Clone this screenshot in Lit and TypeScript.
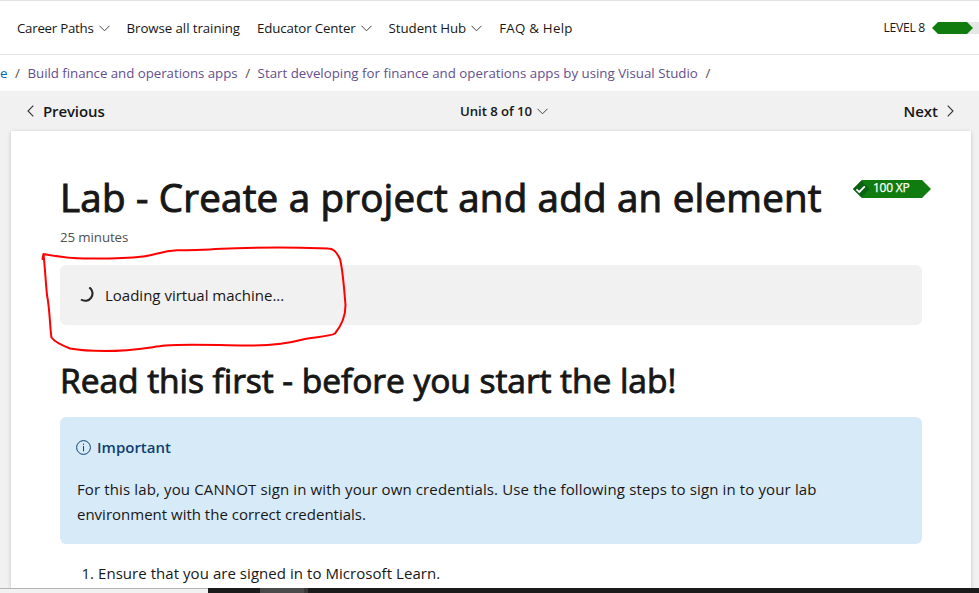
import { LitElement, html, css, svg } from "lit";
import { customElement } from "lit/decorators.js";

const chevronDown = html`<svg class="chev" width="11" height="7" viewBox="0 0 11 7">
  <path d="M.5 .8L5.500 5.800L10.500 .8" fill="none" stroke="currentColor" stroke-width="1" />
</svg>`;

const side = (d: string) => html`<svg class="side" width="7" height="12" viewBox="0 0 7 12">
  ${svg`<path d=${d} fill="none" stroke="currentColor" stroke-width="1.1" />`}
</svg>`;

@customElement("app-root")
export class AppRoot extends LitElement {
  static styles = css`
    :host {
      display: flex;
      flex-direction: column;
      position: relative;
      box-sizing: border-box;
      width: 979px;
      height: 593px;
      overflow: hidden;
      background: #fff;
      color: #171717;
      font-family: "Open Sans", "Noto Sans", sans-serif;
      white-space: nowrap;
    }
    * { box-sizing: border-box; margin: 0; }
    svg { display: block; flex: none; }
    .nav {
      flex: none;
      height: 55px;
      border-top: 1px solid #e3e3e3;
      border-bottom: 1px solid #e3e3e3;
      display: flex;
      align-items: center;
      padding-left: 17px;
      font-size: 13.3px;
    }
    .item { display: flex; align-items: center; gap: 5px; margin-right: 17px; }
    .item .chev { margin-top: 2px; }
    .n1 { letter-spacing: -0.26px; }
    .n2 { letter-spacing: -0.08px; }
    .n3 { letter-spacing: -0.14px; }
    .n4 { letter-spacing: -0.06px; }
    .n5 { letter-spacing: 0.25px; }
    .chev { color: #444; }
    .level { margin-left: auto; display: flex; align-items: center; gap: 7px; }
    .level-text { font-size: 12.2px; letter-spacing: -0.3px; }
    .crumbs {
      flex: none;
      height: 36px;
      display: flex;
      align-items: center;
      font-size: 13.3px;
      color: #64508f;
    }
    .c1 { letter-spacing: -0.04px; }
    .home { color: #0065b3; }
    .sep { color: #505050; width: 20px; text-align: center; }
    .unit {
      flex: none;
      height: 40px;
      background: #f1f1f1;
      display: grid;
      grid-template-columns: 1fr auto 1fr;
      align-items: center;
      padding: 0 25px 0 27px;
      font-weight: 600;
      font-size: 15px;
    }
    .step { display: flex; align-items: center; gap: 9px; }
    .prev-text { letter-spacing: -0.12px; }
    .next { justify-content: flex-end; }
    .count { gap: 5px; padding-left: 27px; font-size: 13.2px; letter-spacing: -0.06px; }
    .side { color: #333; }
    .page { flex: 1; background: #f1f1f1; padding: 0 8px 0 11px; min-height: 0; }
    .card {
      height: 100%;
      background: #fff;
      box-shadow: 0 1px 4px rgba(0, 0, 0, 0.2);
      padding: 39px 49px 0;
      overflow: hidden;
    }
    .title-row { display: flex; height: 57px; width: 871px; justify-content: space-between; }
    h1 {
      font-size: 38.5px;
      line-height: 54px;
      font-weight: 400;
      letter-spacing: 0.22px;
      -webkit-text-stroke: 1px currentColor;
    }
    .xp { position: relative; margin-top: 10px; height: 18px; }
    .xp-text {
      position: absolute;
      left: 20px;
      top: 0;
      line-height: 16px;
      font-size: 12px;
      letter-spacing: -0.25px;
      color: #fff;
      -webkit-text-stroke: 0.25px currentColor;
    }
    .time { font-size: 13.3px; line-height: 20px; color: #505050; letter-spacing: -0.1px; }
    .loading {
      margin-top: 18px;
      height: 60px;
      border-radius: 6px;
      background: #f1f1f1;
      display: flex;
      align-items: center;
      padding-left: 19px;
      gap: 11px;
      font-size: 15px;
    }
    h2 {
      margin-top: 31px;
      font-size: 33.6px;
      line-height: 48px;
      font-weight: 400;
      letter-spacing: -0.07px;
      -webkit-text-stroke: 0.9px currentColor;
    }
    .alert {
      margin-top: 13px;
      height: 127px;
      border-radius: 6px;
      background: #d7eaf8;
      padding: 18px 16px 0;
      font-size: 15px;
      line-height: 25px;
    }
    .alert-title { display: flex; align-items: center; gap: 6px; color: #10406d; font-weight: 600; height: 25px; }
    .alert p { margin-top: 17px; padding-left: 1px; }
    .p1 { letter-spacing: 0.13px; }
    .steps { margin-top: 17px; padding-left: 38px; font-size: 15px; line-height: 25px; letter-spacing: 0.05px; }
    .edge { flex: none; height: 5px; display: flex; background: #1b1b1b; }
    .tray { width: 208px; background: #f2f2f2; border-top: 1px solid #b4b4b4; }
    .task { width: 44px; margin-left: 52px; background: #4a4a4a; }
    .task-end { width: 4px; background: #383838; }
    .ink { position: absolute; left: 0; top: 0; pointer-events: none; }
  `;

  render() {
    return html`
      <nav class="nav">
        <span class="item"><span class="n1">Career Paths</span>${chevronDown}</span>
        <span class="item"><span class="n2">Browse all training</span></span>
        <span class="item"><span class="n3">Educator Center</span>${chevronDown}</span>
        <span class="item"><span class="n4">Student Hub</span>${chevronDown}</span>
        <span class="item"><span class="n5">FAQ &amp; Help</span></span>
        <span class="level">
          <span class="level-text">LEVEL 8</span>
          <svg width="47" height="12" viewBox="0 0 47 12">
            <path d="M34 0H47V12H34Z" fill="#e6e6e6" />
            <path d="M0 6L6 0H35L41 6L35 12H6Z" fill="#107c10" />
          </svg>
        </span>
      </nav>
      <div class="crumbs">
        <span class="home">e</span><span class="sep">/</span>
        <span class="c1">Build finance and operations apps</span><span class="sep">/</span>
        <span class="c2">Start developing for finance and operations apps by using Visual Studio</span><span class="sep">/</span>
      </div>
      <div class="unit">
        <span class="step">${side("M6.3 .7L1 6L6.3 11.3")}<span class="prev-text">Previous</span></span>
        <span class="step count"><span class="count-text">Unit 8 of 10</span>${chevronDown}</span>
        <span class="step next"><span class="next-text">Next</span>${side("M.7 .7L6 6L.7 11.3")}</span>
      </div>
      <div class="page">
        <main class="card">
          <div class="title-row">
            <h1><span>Lab - Create a project and add an element</span></h1>
            <div class="xp">
              <svg width="78" height="18" viewBox="0 0 78 18">
                <path d="M0 9L9 0H69L78 9L69 18H9Z" fill="#107c10" />
                <path d="M0 9L8.500 .5L16.500 9L8.500 17.500Z" fill="#0b6113" />
                <path d="M3.500 9.300L6.300 12L11.800 6.400" fill="none" stroke="#fff" stroke-width="1.8" />
              </svg>
              <span class="xp-text">100 XP</span>
            </div>
          </div>
          <div class="time"><span>25 minutes</span></div>
          <div class="loading">
            <svg width="15" height="16" viewBox="0 0 15 16">
              <path d="M10.300 .4A6.800 6.800 0 0 1 2 12.500" fill="none" stroke="#262626" stroke-width="2.1" />
            </svg>
            <span class="load-text">Loading virtual machine...</span>
          </div>
          <h2><span>Read this first - before you start the lab!</span></h2>
          <section class="alert">
            <div class="alert-title">
              <svg width="15" height="15" viewBox="0 0 15 15">
                <circle cx="7.500" cy="7.500" r="6.900" fill="none" stroke="currentColor" stroke-width="1" />
                <path d="M7.500 6V11.300M7.500 3.600V4.800" stroke="currentColor" stroke-width="1" />
              </svg>
              <span>Important</span>
            </div>
            <p>
              <span class="p1">For this lab, you CANNOT sign in with your own credentials. Use the following steps to sign in to your lab</span><br />
              <span class="p2">environment with the correct credentials.</span>
            </p>
          </section>
          <ol class="steps">
            <li><span>Ensure that you are signed in to Microsoft Learn.</span></li>
          </ol>
        </main>
      </div>
      <div class="edge"><span class="tray"></span><span class="task"></span><span class="task-end"></span></div>
      <svg class="ink" width="360" height="360" viewBox="0 0 360 360">
        <path
          d="M42.500 259L43.500 254C55 256 68 258.500 85 258.500C105 258.800 125 258.500 143 256.500C155 255 162 251 177 250.200C190 250 203 250.500 215 249C240 248 270 247 300 247.800L328 248.500C333 248.500 336 251 340 259C343 271 344 288 345.500 305C345.500 317 342 325 335 333.500C331 336 318 337 305 339C290 343 270 346 245 345.500C220 345.500 190 343.500 165 345.500C145 348 130 351 105 351C90 351 78 350 70 348.500C61 345 54 341 51.500 337.500C50 330 50 310 47 295C45.500 280 45 268 43.500 254"
          fill="none" stroke="#f00" stroke-width="2" stroke-linejoin="round" stroke-linecap="round" />
      </svg>
    `;
  }
}
